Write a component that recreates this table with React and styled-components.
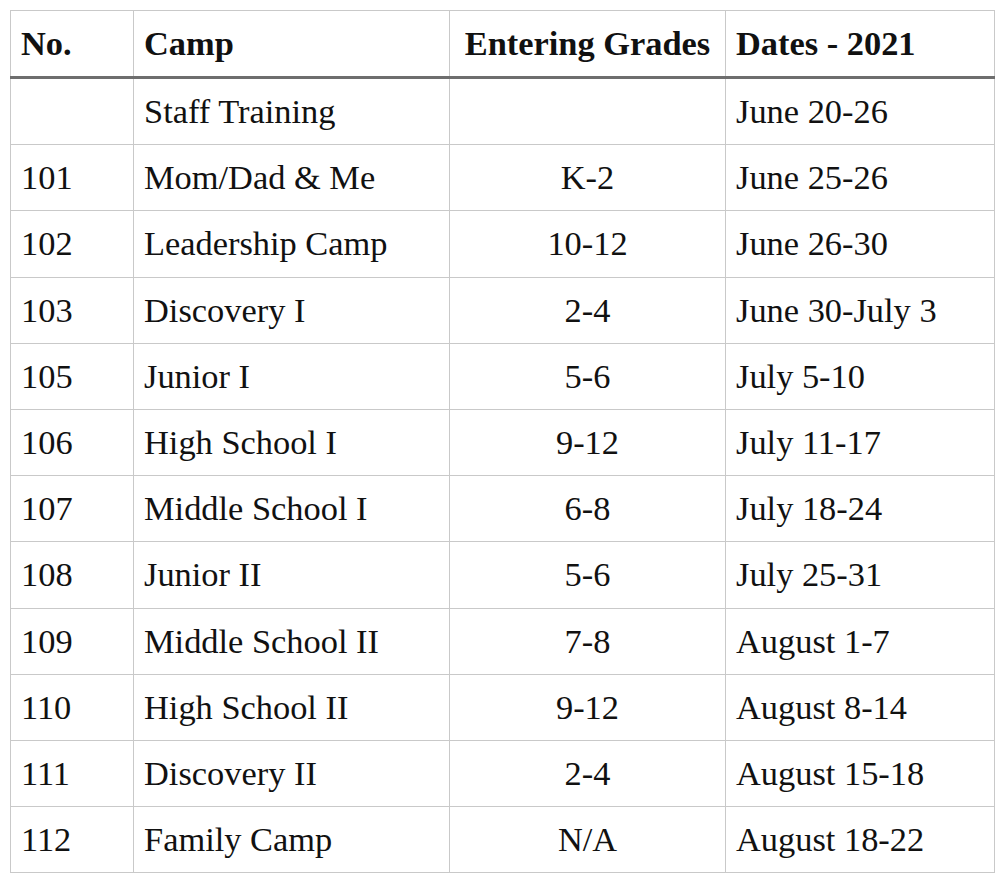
import React from 'react'
import styled, { createGlobalStyle } from 'styled-components'

const GlobalStyle = createGlobalStyle`
  html, body {
    margin: 0;
    padding: 0;
    background: #ffffff;
  }
  body {
    font-family: "Liberation Serif", "Times New Roman", serif;
    color: #111111;
  }
`

const Page = styled.div`
  padding: 10px 0 0 10px;
`

const Table = styled.table`
  width: 984px;
  border-collapse: collapse;
  table-layout: fixed;
  font-size: 34.4px;
`

const HeadCell = styled.th`
  height: 65px;
  padding: 0 10px;
  border: 1px solid #c9c9c9;
  border-bottom: 3px solid #6e6e6e;
  font-weight: bold;
  text-align: ${props => (props.center ? 'center' : 'left')};
  white-space: nowrap;
  vertical-align: middle;
`

const Cell = styled.td`
  height: 65.2px;
  padding: 0 10px;
  border: 1px solid #c9c9c9;
  text-align: ${props => (props.center ? 'center' : 'left')};
  white-space: nowrap;
  vertical-align: middle;
`

const camps = [
  { no: '', name: 'Staff Training', grades: '', dates: 'June 20-26' },
  { no: '101', name: 'Mom/Dad & Me', grades: 'K-2', dates: 'June 25-26' },
  { no: '102', name: 'Leadership Camp', grades: '10-12', dates: 'June 26-30' },
  { no: '103', name: 'Discovery I', grades: '2-4', dates: 'June 30-July 3' },
  { no: '105', name: 'Junior I', grades: '5-6', dates: 'July 5-10' },
  { no: '106', name: 'High School I', grades: '9-12', dates: 'July 11-17' },
  { no: '107', name: 'Middle School I', grades: '6-8', dates: 'July 18-24' },
  { no: '108', name: 'Junior II', grades: '5-6', dates: 'July 25-31' },
  { no: '109', name: 'Middle School II', grades: '7-8', dates: 'August 1-7' },
  { no: '110', name: 'High School II', grades: '9-12', dates: 'August 8-14' },
  { no: '111', name: 'Discovery II', grades: '2-4', dates: 'August 15-18' },
  { no: '112', name: 'Family Camp', grades: 'N/A', dates: 'August 18-22' },
]

export default function App() {
  return (
    <Page>
      <GlobalStyle />
      <Table>
        <colgroup>
          <col style={{ width: 123 }} />
          <col style={{ width: 316 }} />
          <col style={{ width: 276 }} />
          <col style={{ width: 269 }} />
        </colgroup>
        <thead>
          <tr>
            <HeadCell>No.</HeadCell>
            <HeadCell>Camp</HeadCell>
            <HeadCell center>Entering Grades</HeadCell>
            <HeadCell>Dates - 2021</HeadCell>
          </tr>
        </thead>
        <tbody>
          {camps.map((c, i) => (
            <tr key={i}>
              <Cell>{c.no}</Cell>
              <Cell>{c.name}</Cell>
              <Cell center>{c.grades}</Cell>
              <Cell>{c.dates}</Cell>
            </tr>
          ))}
        </tbody>
      </Table>
    </Page>
  )
}
